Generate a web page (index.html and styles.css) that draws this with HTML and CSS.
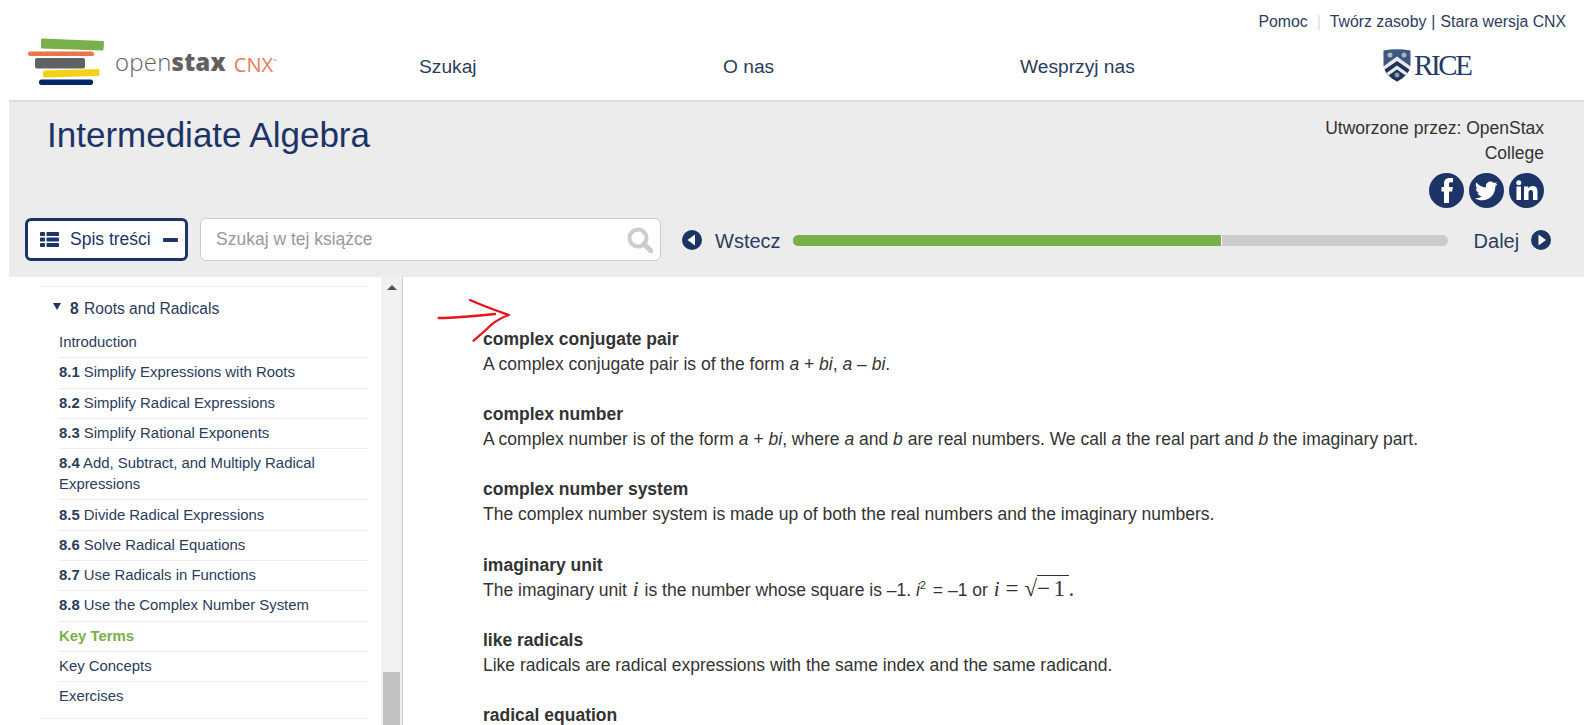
FILE: index.html
```html
<!DOCTYPE html>
<html lang="pl">
<head>
  <meta charset="UTF-8" />
  <title>Intermediate Algebra - OpenStax CNX</title>
  <link rel="stylesheet" href="styles.css">
</head>
<body>
  <div class="top-links">
    <a>Pomoc</a>
    <span class="sep-light">|</span>
    <a>Twórz zasoby</a>
    <span class="sep">|</span>
    <a>Stara wersja CNX</a>
  </div>

  <header class="main-nav">
    <div class="logo">
      <svg class="logo-books" width="76" height="48" viewBox="0 0 76 48">
        <path d="M14 0.5 L75 3 Q76 3 76 5 L75.500 11 Q75.500 12.500 74 12.500 L14 10.500 Q13 10.500 13 9 L13 2 Q13 0.500 14 0.500Z" fill="#78b04a"/>
        <path d="M2 13.500 L64 13.500 Q66 14 66 16.500 Q66 18 64 18 L2 18 Q0 18 0 15.700 Q0 13.500 2 13.500Z" fill="#ed7349"/>
        <rect x="7" y="20" width="50" height="10.500" rx="2" fill="#5f6163"/>
        <path d="M17 32.500 L70 31 Q71.500 31 71.500 33 L71.500 37 Q71.500 38 70 38 L17 39.500 Q15 39.500 15 38 L15 34 Q15 32.500 17 32.500Z" fill="#f4d019"/>
        <rect x="11" y="41.500" width="54" height="5.500" rx="2.500" fill="#002569"/>
      </svg>
      <span class="logo-name">open<b>stax</b></span>
      <span class="logo-cnx">CNX<sup>™</sup></span>
    </div>
    <nav class="nav-links">
      <a>Szukaj</a>
      <a>O nas</a>
      <a>Wesprzyj nas</a>
    </nav>
    <div class="rice">
      <svg width="28" height="33" viewBox="0 0 28 33">
        <path d="M0.500 1.500 Q14 -1 27.500 1.500 L27.500 16 Q27 26 14 32.500 Q1 26 0.500 16Z" fill="#3f5680"/>
        <path d="M1 17 Q2 26 14 32.500 Q26 26 27 17 L14 11Z" fill="#1f3358"/>
        <path d="M1 17 L14 7.500 L27 17 L27 21 L14 12 L1 21Z" fill="#e6e9ee"/>
        <path d="M3.500 24 L14 16.500 L24.500 24 L22.500 26.500 L14 20.500 L5.500 26.500Z" fill="#e6e9ee"/>
        <circle cx="7" cy="6" r="2.500" fill="#a9b4c6"/>
        <circle cx="21" cy="6" r="2.500" fill="#a9b4c6"/>
        <circle cx="14" cy="26" r="2.500" fill="#8a98b0"/>
      </svg>
      <span class="rice-name">RICE</span>
    </div>
  </header>

  <section class="book-bar">
    <div class="book-head">
      <h1>Intermediate Algebra</h1>
      <div class="book-meta">
        <div class="authors">Utworzone przez: OpenStax<br>College</div>
        <div class="share">
          <svg class="share-icon" viewBox="0 0 35 35"><circle cx="17.500" cy="17.500" r="17.500" fill="#1d3467"/><path d="M15 30 V18.500 H12.500 V14 H15 V11 C15 7 17 5 20.500 5 H24 V9.200 H21.800 C20.300 9.200 20 9.800 20 11 V14 H23.800 L23.200 18.500 H20 V30Z" fill="#fff"/></svg>
          <svg class="share-icon" viewBox="0 0 35 35"><circle cx="17.500" cy="17.500" r="17.500" fill="#1d3467"/><path d="M28.500 10.800 C27.600 11.200 26.800 11.400 25.900 11.500 C26.800 10.900 27.500 10 27.900 9 C27 9.500 26.100 9.900 25 10.100 C24.100 9.200 22.900 8.600 21.600 8.600 C19 8.600 16.900 10.700 16.900 13.300 C16.900 13.700 17 14 17 14.400 C13.100 14.200 9.700 12.300 7.400 9.500 C7 10.200 6.800 11 6.800 11.900 C6.800 13.500 7.600 15 8.900 15.800 C8.100 15.800 7.400 15.600 6.800 15.200 C6.800 17.600 8.400 19.500 10.600 20 C9.900 20.200 9.200 20.200 8.500 20.100 C9.100 22 10.800 23.300 12.900 23.300 C11.300 24.600 9.200 25.300 7 25.300 C6.700 25.300 6.300 25.300 6 25.200 C8.100 26.500 10.500 27.300 13.100 27.300 C21.600 27.300 26.300 20.200 26.300 14 V13.400 C27.200 12.800 28 11.800 28.500 10.800Z" fill="#fff"/></svg>
          <svg class="share-icon" viewBox="0 0 35 35"><circle cx="17.500" cy="17.500" r="17.500" fill="#1d3467"/><path d="M7.500 13.500 H12 V27 H7.500Z M9.800 7.300 A2.500 2.500 0 1 1 9.800 12.300 A2.500 2.500 0 1 1 9.800 7.300Z M15 13.500 H19.300 V15.400 C20 14.200 21.400 13.100 23.500 13.100 C27.800 13.100 28.500 15.900 28.500 19.600 V27 H24 V20.500 C24 18.900 24 17 21.800 17 C19.700 17 19.500 18.600 19.500 20.400 V27 H15Z" fill="#fff"/></svg>
        </div>
      </div>
    </div>

    <div class="book-tools">
      <button class="toc-btn" type="button">
        <svg width="19" height="15" viewBox="0 0 19 15" fill="#1d3467"><rect width="5" height="4" rx="0.800"/><rect y="5.500" width="5" height="4" rx="0.800"/><rect y="11" width="5" height="4" rx="0.800"/><rect x="6.500" width="12.500" height="4" rx="0.800"/><rect x="6.500" y="5.500" width="12.500" height="4" rx="0.800"/><rect x="6.500" y="11" width="12.500" height="4" rx="0.800"/></svg>
        <span class="toc-label">Spis treści</span>
        <span class="toc-minus"></span>
      </button>
      <div class="search">
        <span class="search-text">Szukaj w tej książce</span>
        <svg width="26" height="26" viewBox="0 0 26 26" fill="none" stroke="#cccccc"><circle cx="11" cy="11" r="8.500" stroke-width="4"/><path d="M17 17 L24 24" stroke-width="5" stroke-linecap="round"/></svg>
      </div>
      <div class="pager">
        <svg class="pager-icon" viewBox="0 0 20 20"><circle cx="10" cy="10" r="10" fill="#1d3467"/><path d="M13 4.500 V15.500 L5.500 10Z" fill="#fff"/></svg>
        <span class="pager-text prev">Wstecz</span>
        <div class="progress"><div class="progress-done" style="width: 65.400%"></div></div>
        <span class="pager-text next">Dalej</span>
        <svg class="pager-icon" viewBox="0 0 20 20"><circle cx="10" cy="10" r="10" fill="#1d3467"/><path d="M7.500 4.500 V15.500 L15 10Z" fill="#fff"/></svg>
      </div>
    </div>
  </section>

  <div class="book-body">
    <aside class="toc">
      <div class="toc-scroll">
        <div class="chapter">
          <span class="caret"></span>
          <span><b>8</b> Roots and Radicals</span>
        </div>
        <ul class="toc-list">
          <li>Introduction</li>
          <li><b>8.1</b> Simplify Expressions with Roots</li>
          <li><b>8.2</b> Simplify Radical Expressions</li>
          <li><b>8.3</b> Simplify Rational Exponents</li>
          <li><b>8.4</b> Add, Subtract, and Multiply Radical Expressions</li>
          <li><b>8.5</b> Divide Radical Expressions</li>
          <li><b>8.6</b> Solve Radical Equations</li>
          <li><b>8.7</b> Use Radicals in Functions</li>
          <li><b>8.8</b> Use the Complex Number System</li>
          <li class="current">Key Terms</li>
          <li>Key Concepts</li>
          <li>Exercises</li>
        </ul>
      </div>
      <div class="scrollbar">
        <span class="scroll-up"></span>
        <div class="scroll-thumb"></div>
      </div>
    </aside>

    <main class="terms">
      <dl>
        <dt>complex conjugate pair</dt>
        <dd>A complex conjugate pair is of the form <i>a</i> + <i>bi</i>, <i>a</i> – <i>bi</i>.</dd>
        <dt>complex number</dt>
        <dd>A complex number is of the form <i>a</i> + <i>bi</i>, where <i>a</i> and <i>b</i> are real numbers. We call <i>a</i> the real part and <i>b</i> the imaginary part.</dd>
        <dt>complex number system</dt>
        <dd>The complex number system is made up of both the real numbers and the imaginary numbers.</dd>
        <dt>imaginary unit</dt>
        <dd>The imaginary unit <span class="math"><i>i</i></span> is the number whose square is –1. <i>i</i><sup>2</sup> = –1 or <span class="math"><i>i</i><span class="math-eq">=</span><span class="math-root">√<span class="radicand">−1</span>.</span></span></dd>
        <dt>like radicals</dt>
        <dd>Like radicals are radical expressions with the same index and the same radicand.</dd>
        <dt>radical equation</dt>
      </dl>
    </main>

    <svg class="red-arrow" width="80" height="48" viewBox="0 0 80 48" fill="none" stroke="#e8141c" stroke-width="2.300" stroke-linecap="round" stroke-linejoin="round">
      <path d="M3.600 21 C20 21 40 19 60 17"/>
      <path d="M35 3 C48 9 60 13 74 18 C68 20 62 23 56 28 C50 34 44 39 38.600 43.700"/>
    </svg>
  </div>
</body>
</html>
```

FILE: styles.css
```css
html, body {
  height: 100%;
}
body {
  font-family: "Liberation Sans", Arial, sans-serif;
  background-color: #fff;
  color: #333;
  margin: 0;
  overflow: hidden;
}

.top-links {
  display: flex;
  justify-content: flex-end;
  align-items: center;
  gap: 5px;
  height: 21px;
  padding: 11px 25px 0 0;
  margin-bottom: -1px;
  font-size: 15.800px;
  color: #2b3c5e;
}
.sep-light {
  color: #ddd;
  margin: 0 4px;
}

.main-nav {
  display: flex;
  align-items: center;
  height: 69px;
}
.logo {
  display: flex;
  align-items: center;
  width: 419px;
  padding-left: 28px;
  margin-top: -8px;
  box-sizing: border-box;
}
.logo-name {
  margin-left: 11px;
  font-family: "Open Sans", sans-serif;
  font-size: 24px;
  font-weight: 300;
  letter-spacing: 0.200px;
  color: #5f6163;
}
.logo-name b {
  font-weight: 800;
}
.logo-cnx {
  margin-left: 8px;
  padding-top: 5px;
  font-family: "Open Sans", sans-serif;
  font-size: 20px;
  color: #e97b57;
}
.logo-cnx sup {
  font-size: 5px;
  vertical-align: 9px;
}
.nav-links {
  display: grid;
  grid-template-columns: 304px 297px 363px;
  padding-top: 3px;
  font-size: 19.200px;
  color: #2b3c5e;
}
.rice {
  display: flex;
  align-items: center;
  gap: 3px;
}
.rice-name {
  font-family: "Liberation Serif", serif;
  font-size: 29px;
  letter-spacing: -2.400px;
  color: #243a66;
}

.book-bar {
  margin: 0 7px 0 9px;
  height: 175px;
  background-color: #ececec;
  border-top: 2px solid #dcdcdc;
  display: flex;
  flex-direction: column;
}
.book-head {
  display: flex;
  justify-content: space-between;
  height: 116px;
  padding: 13px 40px 0 38px;
  box-sizing: border-box;
}
h1 {
  margin: 0;
  font-size: 35px;
  line-height: 40px;
  font-weight: normal;
  color: #1d3467;
}
.book-meta {
  padding-top: 1px;
  text-align: right;
  font-size: 17.500px;
  line-height: 25px;
}
.share {
  display: flex;
  justify-content: flex-end;
  gap: 5px;
  margin-top: 7px;
}
.share-icon {
  width: 35px;
  height: 35px;
}

.book-tools {
  display: flex;
  align-items: center;
  padding-left: 16px;
}
.toc-btn {
  display: flex;
  align-items: center;
  width: 163px;
  height: 43px;
  padding: 0 0 0 12px;
  box-sizing: border-box;
  background-color: #fff;
  border: 3px solid #1d3467;
  border-radius: 6px;
  font-family: inherit;
  font-size: 17.500px;
  color: #1d3467;
}
.toc-label {
  margin-left: 11px;
}
.toc-minus {
  width: 15px;
  height: 4px;
  margin-left: 12px;
  border-radius: 1px;
  background-color: #1d3467;
}
.search {
  display: flex;
  align-items: center;
  justify-content: space-between;
  width: 461px;
  height: 43px;
  margin-left: 12px;
  padding: 0 7px 0 15px;
  box-sizing: border-box;
  background-color: #fff;
  border: 1px solid #ccc;
  border-radius: 6px;
  font-size: 17.500px;
  color: #999;
}
.pager {
  display: flex;
  align-items: center;
  width: 870px;
  margin-left: 21px;
  color: #2b3c5e;
}
.pager-icon {
  width: 20px;
  height: 20px;
  flex: none;
}
.pager-text {
  padding-top: 4px;
  font-size: 20px;
}
.prev {
  margin: 0 12px 0 13px;
}
.next {
  margin: 0 12px 0 26px;
}
.progress {
  width: 655px;
  height: 11px;
  margin-top: 2px;
  border-radius: 6px;
  background-color: #ccc;
  overflow: hidden;
}
.progress-done {
  height: 100%;
  background-color: #78b04a;
  border-right: 1px solid #fff;
}

.book-body {
  display: flex;
  position: relative;
  margin-left: 9px;
}
.toc {
  display: flex;
  width: 393px;
  height: 448px;
  flex: none;
  border-right: 1px solid #ccc;
}
.toc-scroll {
  width: 372px;
  padding: 9px 13px 0 31px;
  box-sizing: border-box;
  color: #2b3c5e;
}
.chapter {
  display: flex;
  align-items: center;
  height: 42px;
  padding: 2px 0 0 13px;
  border-top: 1px solid #eee;
  box-sizing: border-box;
  font-size: 15.600px;
}
.chapter b {
  margin-right: 1px;
}
.caret {
  width: 0;
  height: 0;
  margin: -4px 9px 0 0;
  border-left: 4px solid transparent;
  border-right: 4px solid transparent;
  border-top: 7px solid #1d3467;
}
.toc-list {
  list-style: none;
  margin: 0;
  padding: 0 0 0 19px;
  font-size: 14.900px;
  line-height: 21px;
}
.toc-list li {
  padding: 4.150px 0;
  border-bottom: 1px solid #eee;
}
.toc-list li:last-child {
  padding-bottom: 11px;
  margin-left: -19px;
  padding-left: 19px;
}
.current {
  font-weight: bold;
  color: #78b04a;
}
.scrollbar {
  width: 21px;
  background-color: #f1f1f1;
  position: relative;
}
.scroll-up {
  position: absolute;
  left: 6px;
  top: 8px;
  border-left: 5px solid transparent;
  border-right: 5px solid transparent;
  border-bottom: 5px solid #505050;
}
.scroll-thumb {
  position: absolute;
  left: 2px;
  right: 2px;
  top: 395px;
  bottom: 0;
  background-color: #c1c1c1;
}

.terms {
  padding: 50px 0 0 80px;
  font-size: 17.500px;
  line-height: 25.100px;
}
dl {
  margin: 0;
}
dt {
  font-weight: bold;
}
dd {
  margin: 0 0 25px;
}
sup {
  font-size: 11px;
  line-height: 0;
  margin-right: 2px;
}
.math {
  font-family: "Liberation Serif", serif;
  font-size: 21px;
  line-height: 0;
  margin: 0 1px;
}
.math-eq {
  margin: 0 6px;
  font-size: 23px;
}
.math-root {
  font-size: 23px;
}
.radicand {
  border-top: 1px solid #333;
  letter-spacing: 3.500px;
}
.red-arrow {
  position: absolute;
  left: 426px;
  top: 20px;
}
```
